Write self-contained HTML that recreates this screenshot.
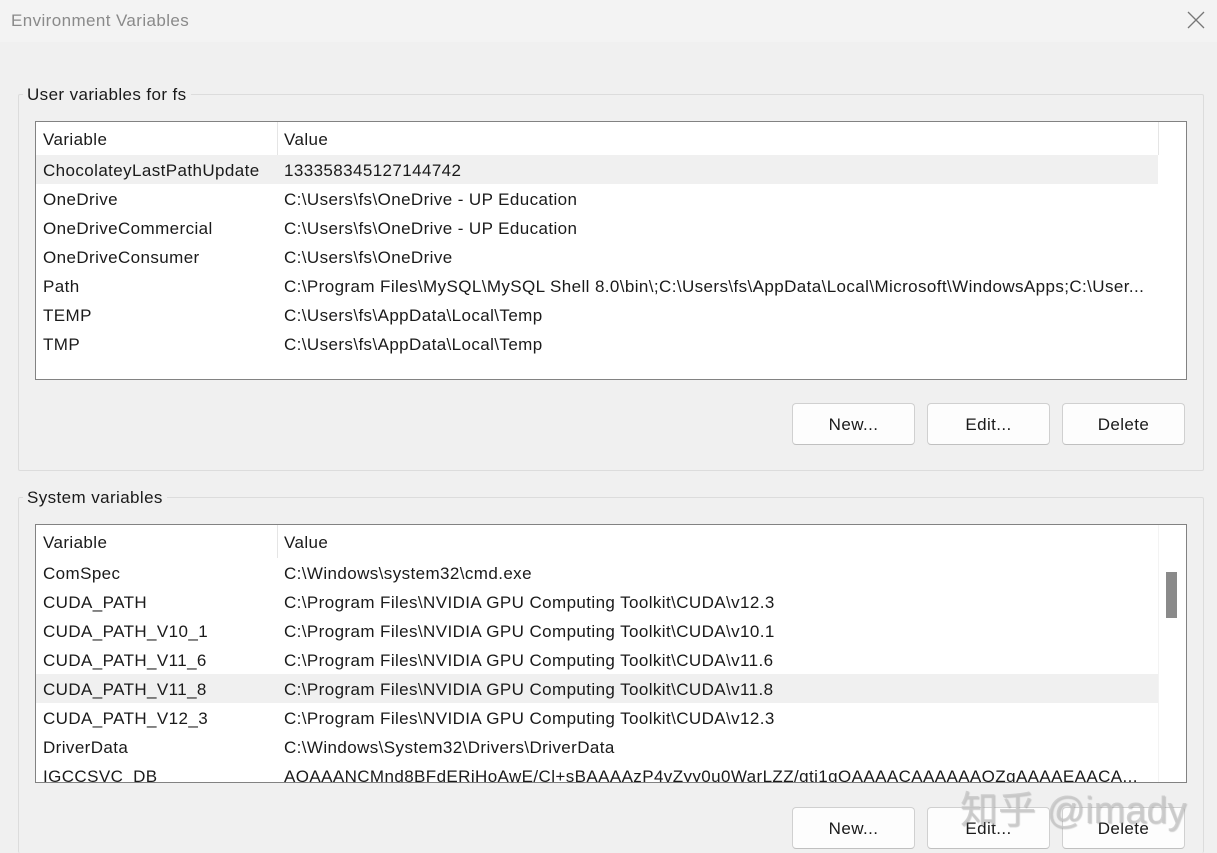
<!DOCTYPE html>
<html><head><style>
*{margin:0;padding:0;box-sizing:border-box}
html,body{width:1217px;height:853px;overflow:hidden}
body{background:#f0f0f0;font-family:"Liberation Sans","DejaVu Sans",sans-serif;font-size:17px;letter-spacing:0.4px;color:#1a1a1a;position:relative}
.abs{position:absolute}
.title{left:0;top:0;width:1217px;height:42px;background:#f3f3f3}
.grp{border:1px solid #dcdcdc;border-radius:2px}
.lbl{background:#f0f0f0;padding:0 4px;white-space:nowrap}
.list{background:#fff;border:1px solid #828282;overflow:hidden}
.row{position:absolute;left:0;height:29px;width:1122px;line-height:31px;white-space:nowrap}
.row span{position:absolute}
.c1{left:7px}.c2{left:248px}
.hl{background:#f0f0f0}
.btn{background:#fdfdfd;border:1px solid #d0d0d0;border-bottom-color:#c0c0c0;border-radius:4px;text-align:center;line-height:42px;width:123px;height:42px}
</style></head><body>
<div class="abs title"></div>
<div class="abs" style="left:11px;top:11px;color:#8a8a8a">Environment Variables</div>
<svg class="abs" style="left:1187px;top:11px" width="18" height="18"><path d="M1 1L17 17M17 1L1 17" stroke="#777" stroke-width="1.3"/></svg>

<div class="abs grp" style="left:18px;top:94px;width:1186px;height:377px"></div>
<div class="abs lbl" style="left:23px;top:85px">User variables for fs</div>
<div class="abs list" style="left:35px;top:121px;width:1152px;height:259px">
 <div class="row" style="top:0;height:33px;line-height:35px"><span class="c1">Variable</span><span class="c2">Value</span></div>
 <div class="abs" style="left:241px;top:0;width:1px;height:33px;background:#e5e5e5"></div>
 <div class="abs" style="left:1122px;top:0;width:1px;height:33px;background:#e5e5e5"></div>
 <div class="row hl" style="top:33px"><span class="c1">ChocolateyLastPathUpdate</span><span class="c2">133358345127144742</span></div>
 <div class="row" style="top:62px"><span class="c1">OneDrive</span><span class="c2">C:\Users\fs\OneDrive - UP Education</span></div>
 <div class="row" style="top:91px"><span class="c1">OneDriveCommercial</span><span class="c2">C:\Users\fs\OneDrive - UP Education</span></div>
 <div class="row" style="top:120px"><span class="c1">OneDriveConsumer</span><span class="c2">C:\Users\fs\OneDrive</span></div>
 <div class="row" style="top:149px"><span class="c1">Path</span><span class="c2">C:\Program Files\MySQL\MySQL Shell 8.0\bin\;C:\Users\fs\AppData\Local\Microsoft\WindowsApps;C:\User...</span></div>
 <div class="row" style="top:178px"><span class="c1">TEMP</span><span class="c2">C:\Users\fs\AppData\Local\Temp</span></div>
 <div class="row" style="top:207px"><span class="c1">TMP</span><span class="c2">C:\Users\fs\AppData\Local\Temp</span></div>
</div>
<div class="abs btn" style="left:792px;top:403px">New...</div>
<div class="abs btn" style="left:927px;top:403px">Edit...</div>
<div class="abs btn" style="left:1062px;top:403px">Delete</div>

<div class="abs grp" style="left:18px;top:497px;width:1186px;height:356px;border-bottom:none"></div>
<div class="abs lbl" style="left:23px;top:488px">System variables</div>
<div class="abs list" style="left:35px;top:524px;width:1152px;height:259px">
 <div class="row" style="top:0;height:33px;line-height:35px"><span class="c1">Variable</span><span class="c2">Value</span></div>
 <div class="abs" style="left:241px;top:0;width:1px;height:33px;background:#e5e5e5"></div>
 <div class="abs" style="left:1122px;top:0;width:1px;height:259px;background:#f3f3f3"></div>
 <div class="abs" style="left:1130px;top:47px;width:11px;height:46px;background:#8a8a8a"></div>
 <div class="row" style="top:33px"><span class="c1">ComSpec</span><span class="c2">C:\Windows\system32\cmd.exe</span></div>
 <div class="row" style="top:62px"><span class="c1">CUDA_PATH</span><span class="c2">C:\Program Files\NVIDIA GPU Computing Toolkit\CUDA\v12.3</span></div>
 <div class="row" style="top:91px"><span class="c1">CUDA_PATH_V10_1</span><span class="c2">C:\Program Files\NVIDIA GPU Computing Toolkit\CUDA\v10.1</span></div>
 <div class="row" style="top:120px"><span class="c1">CUDA_PATH_V11_6</span><span class="c2">C:\Program Files\NVIDIA GPU Computing Toolkit\CUDA\v11.6</span></div>
 <div class="row hl" style="top:149px"><span class="c1">CUDA_PATH_V11_8</span><span class="c2">C:\Program Files\NVIDIA GPU Computing Toolkit\CUDA\v11.8</span></div>
 <div class="row" style="top:178px"><span class="c1">CUDA_PATH_V12_3</span><span class="c2">C:\Program Files\NVIDIA GPU Computing Toolkit\CUDA\v12.3</span></div>
 <div class="row" style="top:207px"><span class="c1">DriverData</span><span class="c2">C:\Windows\System32\Drivers\DriverData</span></div>
 <div class="row" style="top:236px"><span class="c1">IGCCSVC_DB</span><span class="c2">AQAAANCMnd8BFdERjHoAwE/Cl+sBAAAAzP4vZyy0u0WarLZZ/gti1gQAAAACAAAAAAQZgAAAAEAACA...</span></div>
</div>
<div class="abs btn" style="left:792px;top:807px">New...</div>
<div class="abs btn" style="left:927px;top:807px">Edit...</div>
<div class="abs btn" style="left:1062px;top:807px">Delete</div>
<div class="abs" style="left:960px;top:779px;font-size:38px;letter-spacing:0;color:rgba(200,200,200,0.8);font-family:'Liberation Sans','Noto Sans CJK SC',sans-serif;text-shadow:1px 1px 1px rgba(120,120,120,0.35);white-space:nowrap">知乎 @imady</div>
</body></html>
